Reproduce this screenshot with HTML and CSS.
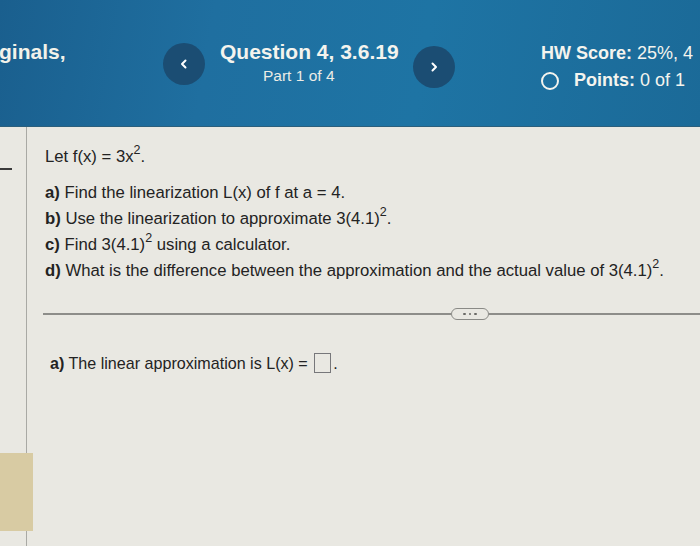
FILE: index.html
```html
<!DOCTYPE html>
<html>
<head>
<meta charset="utf-8">
<link rel="stylesheet" href="styles.css">
</head>
<body>
<header class="topbar">
  <div class="brand">ginals,</div>
  <div class="nav-btn prev">
    <svg width="12" height="12" viewBox="0 0 12 12"><path d="M7.5 2.5 L4 6 L7.5 9.5" fill="none" stroke="#fff" stroke-width="2" stroke-linecap="round" stroke-linejoin="round"/></svg>
  </div>
  <div class="qtitle">
    <div class="qname">Question 4, 3.6.19</div>
    <div class="qpart">Part 1 of 4</div>
  </div>
  <div class="nav-btn next">
    <svg width="12" height="12" viewBox="0 0 12 12"><path d="M4.5 2.5 L8 6 L4.5 9.5" fill="none" stroke="#fff" stroke-width="2" stroke-linecap="round" stroke-linejoin="round"/></svg>
  </div>
  <div class="score">
    <div class="hw"><b>HW Score:</b> 25%, 4</div>
    <div class="pts"><span class="ring"></span><b>Points:</b> 0 of 1</div>
  </div>
</header>
<div class="main">
  <aside class="side">
    <div class="dash"></div>
    <div class="tan"></div>
  </aside>
  <section class="content">
    <p class="let">Let f(x) = 3x<sup>2</sup>.</p>
    <ol class="parts">
      <li><b>a)</b> Find the linearization L(x) of f at a = 4.</li>
      <li><b>b)</b> Use the linearization to approximate 3(4.1)<sup>2</sup>.</li>
      <li><b>c)</b> Find 3(4.1)<sup>2</sup> using a calculator.</li>
      <li><b>d)</b> What is the difference between the approximation and the actual value of 3(4.1)<sup>2</sup>.</li>
    </ol>
    <div class="divider">
      <span class="line"></span>
      <span class="pill"><i></i><i></i><i></i></span>
      <span class="line"></span>
    </div>
    <p class="answer"><b>a)</b> The linear approximation is L(x) = <span class="box"></span>.</p>
  </section>
</div>
</body>
</html>
```
FILE: styles.css
```css
html, body {
  margin: 0;
  padding: 0;
}
body {
  width: 700px;
  height: 546px;
  overflow: hidden;
  background: #e9e8e2;
  font-family: "Liberation Sans", Arial, sans-serif;
  color: #232323;
}
.topbar {
  height: 127px;
  display: flex;
  align-items: flex-start;
  background: linear-gradient(100deg, #1a5f8e 0%, #1f6fa0 30%, #1e74a4 60%, #1b6a98 100%);
  color: #fff;
  border-bottom: 1px solid #2b5f7c;
  box-sizing: border-box;
}
.brand {
  width: 150px;
  margin-left: -1px;
  padding-top: 40px;
  font-size: 21px;
  font-weight: bold;
  color: #f2f2ea;
}
.nav-btn {
  width: 42px;
  height: 42px;
  border-radius: 50%;
  background: #1b4d73;
  display: flex;
  align-items: center;
  justify-content: center;
}
.prev {
  margin-left: 14px;
  margin-top: 43px;
}
.next {
  margin-left: 10px;
  margin-top: 46px;
}
.qtitle {
  margin-left: 15px;
  padding-top: 40px;
  width: 183px;
}
.qname {
  font-size: 21px;
  font-weight: bold;
  color: #f4f4ee;
}
.qpart {
  margin-top: 3px;
  margin-left: 43px;
  font-size: 15.5px;
  color: #ecece6;
}
.score {
  margin-left: 86px;
  padding-top: 43px;
  white-space: nowrap;
  font-size: 18px;
  color: #f4f4ee;
}
.pts {
  margin-top: 6px;
  display: flex;
  align-items: center;
}
.ring {
  width: 14px;
  height: 14px;
  border: 2.5px solid #f4f4ee;
  border-radius: 50%;
  margin-right: 15px;
}
.pts b {
  margin-right: 5px;
}
.main {
  display: flex;
  height: 419px;
}
.side {
  width: 26px;
  flex: none;
  border-right: 1.5px solid #a9a9a4;
  display: flex;
  flex-direction: column;
}
.dash {
  margin-top: 41px;
  width: 12px;
  height: 2px;
  background: #3a3a3a;
}
.tan {
  margin-top: 283px;
  width: 33px;
  height: 78px;
  background: #d8cba3;
}
.content {
  flex: 1;
  padding-left: 18px;
  padding-top: 20px;
  font-size: 16.7px;
}
.content p {
  margin: 0;
}
sup {
  font-size: 12.5px;
  vertical-align: 8px;
  line-height: 0;
}
.parts {
  list-style: none;
  margin: 13px 0 0 0;
  padding: 0;
}
.parts li {
  line-height: 26px;
}
.divider {
  display: flex;
  align-items: center;
  margin-top: 24px;
  margin-left: -2px;
}
.divider .line {
  flex: 1;
  height: 1.5px;
  background: #8d8d89;
}
.divider .line:first-child {
  flex: none;
  width: 408px;
}
.pill {
  width: 36px;
  height: 10px;
  border: 1.5px solid #8a8a86;
  border-radius: 6px;
  display: flex;
  align-items: center;
  justify-content: center;
  gap: 3px;
}
.pill i {
  width: 2.5px;
  height: 2.5px;
  background: #6a6a66;
  border-radius: 50%;
}
.answer {
  margin-top: 33px !important;
  margin-left: 5px !important;
  display: flex;
  align-items: center;
  white-space: pre;
  font-size: 16.1px;
}
.box {
  display: inline-block;
  width: 15px;
  height: 18px;
  border: 1.5px solid #77777a;
  margin-left: 2px;
  margin-right: 2px;
}
```
